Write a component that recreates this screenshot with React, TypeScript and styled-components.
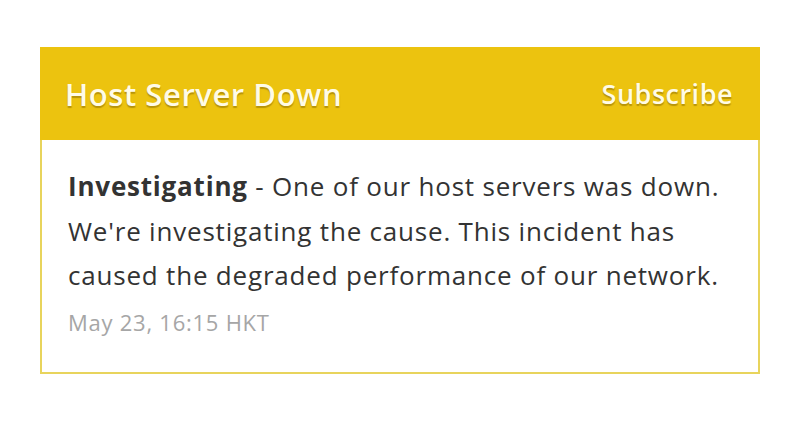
import React from 'react';
import styled, { createGlobalStyle } from 'styled-components';

const GlobalStyle = createGlobalStyle`
  html, body {
    margin: 0;
    padding: 0;
    background: #ffffff;
  }
  body {
    font-family: 'Open Sans', 'Lato', sans-serif;
  }
`;

const Page = styled.div`
  width: 800px;
  height: 429px;
  padding: 47px 40px 0 40px;
  box-sizing: border-box;
`;

const Card = styled.section`
  width: 720px;
  border: 2px solid #e8d45c;
  border-top: none;
  box-sizing: border-box;
  background: #fff;
`;

const Header = styled.header`
  height: 93px;
  margin: 0 -2px;
  padding: 0 27px 0 25px;
  background: #ecc30f;
  display: flex;
  justify-content: space-between;
  align-items: center;
  color: #fffbe6;
  text-shadow: 0 2px 1px rgba(120, 90, 0, 0.45);
`;

const Title = styled.h1`
  margin: 0;
  font-size: 31px;
  font-weight: 600;
  letter-spacing: 0.55px;
`;

const SubscribeLink = styled.a`
  font-size: 27px;
  font-weight: 600;
  letter-spacing: 0.5px;
  cursor: pointer;
`;

const Body = styled.div`
  padding: 24px 20px 36px 26px;
  color: #333333;
`;

const Message = styled.p`
  margin: 0;
  font-size: 26px;
  line-height: 44.5px;
  letter-spacing: 0.8px;
  white-space: nowrap;
`;

const Status = styled.strong`
  font-weight: 700;
`;

const Timestamp = styled.div`
  margin-top: 10px;
  font-size: 22px;
  line-height: 28px;
  letter-spacing: 0.75px;
  color: #a6a6a6;
`;

export default function App() {
  return (
    <>
      <GlobalStyle />
      <Page>
        <Card>
          <Header>
            <Title>Host Server Down</Title>
            <SubscribeLink>Subscribe</SubscribeLink>
          </Header>
          <Body>
            <Message>
              <Status>Investigating</Status> - One of our host servers was down.
              <br />
              We're investigating the cause. This incident has
              <br />
              caused the degraded performance of our network.
            </Message>
            <Timestamp>May 23, 16:15 HKT</Timestamp>
          </Body>
        </Card>
      </Page>
    </>
  );
}
